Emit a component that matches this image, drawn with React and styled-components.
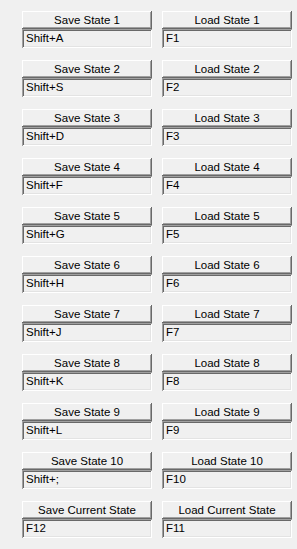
import React from "react";
import styled, { createGlobalStyle } from "styled-components";

const GlobalStyle = createGlobalStyle`
  html, body {
    margin: 0;
    padding: 0;
    background: #f0f0f0;
  }
`;

const Panel = styled.div`
  width: 297px;
  height: 549px;
  box-sizing: border-box;
  padding: 11px 0 0 22px;
  background: #f0f0f0;
  display: grid;
  grid-template-columns: 130px 130px;
  column-gap: 10px;
  row-gap: 12px;
  align-content: start;
  font-family: "Liberation Sans", Arial, sans-serif;
  font-size: 11.5px;
  color: #000;
`;

const Slot = styled.div`
  display: flex;
  flex-direction: column;
`;

const Button = styled.button`
  height: 18px;
  margin: 0;
  padding: 0;
  border: none;
  background: #f0f0f0;
  font: inherit;
  color: #000;
  text-align: center;
  line-height: 16px;
  box-shadow: inset -1px -1px #696969, inset 1px 1px #ffffff,
    inset -2px -2px #a0a0a0, inset 2px 2px #f0f0f0;
  cursor: default;
`;

const Field = styled.div`
  height: 19px;
  box-sizing: border-box;
  padding: 0 0 0 4px;
  line-height: 19px;
  background: #f0f0f0;
  box-shadow: inset 1px 1px #a0a0a0, inset -1px -1px #ffffff,
    inset 2px 2px #696969, inset -2px -2px #e3e3e3;
  white-space: nowrap;
  overflow: hidden;
`;

const slots = [
  ["Save State 1", "Shift+A", "Load State 1", "F1"],
  ["Save State 2", "Shift+S", "Load State 2", "F2"],
  ["Save State 3", "Shift+D", "Load State 3", "F3"],
  ["Save State 4", "Shift+F", "Load State 4", "F4"],
  ["Save State 5", "Shift+G", "Load State 5", "F5"],
  ["Save State 6", "Shift+H", "Load State 6", "F6"],
  ["Save State 7", "Shift+J", "Load State 7", "F7"],
  ["Save State 8", "Shift+K", "Load State 8", "F8"],
  ["Save State 9", "Shift+L", "Load State 9", "F9"],
  ["Save State 10", "Shift+;", "Load State 10", "F10"],
  ["Save Current State", "F12", "Load Current State", "F11"],
];

const App = () => {
  return (
    <>
      <GlobalStyle />
      <Panel>
        {slots.map(([save, saveKey, load, loadKey]) => (
          <React.Fragment key={save}>
            <Slot>
              <Button>{save}</Button>
              <Field>{saveKey}</Field>
            </Slot>
            <Slot>
              <Button>{load}</Button>
              <Field>{loadKey}</Field>
            </Slot>
          </React.Fragment>
        ))}
      </Panel>
    </>
  );
};

export default App;
